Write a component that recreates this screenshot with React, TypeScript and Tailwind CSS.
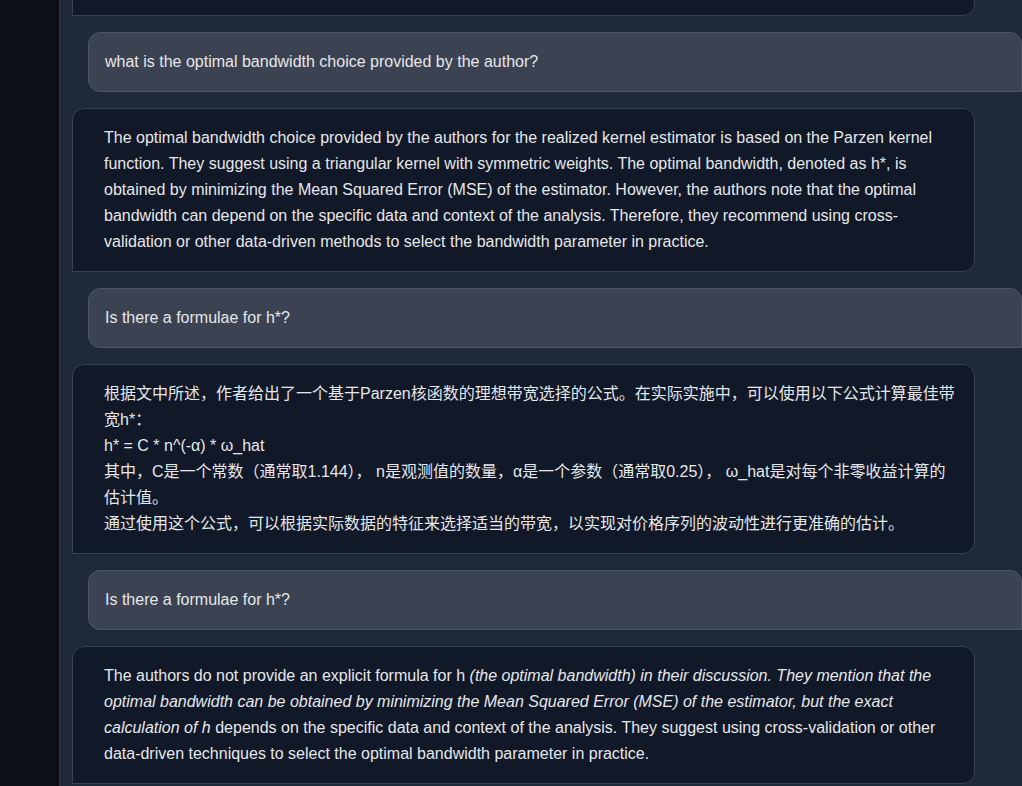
import React from 'react';

type Msg = { role: 'user' | 'assistant'; content: React.ReactNode };

const messages: Msg[] = [
  {
    role: 'assistant',
    content: (
      <p>
        The realized kernel estimator uses a weighted sum of realized autocovariances, which makes it robust to
        market microstructure noise and provides a consistent estimate of the integrated variance.
      </p>
    ),
  },
  { role: 'user', content: 'what is the optimal bandwidth choice provided by the author?' },
  {
    role: 'assistant',
    content: (
      <p>
        The optimal bandwidth choice provided by the authors for the realized kernel estimator is based on the Parzen
        kernel function. They suggest using a triangular kernel with symmetric weights. The optimal bandwidth, denoted
        as h*, is obtained by minimizing the Mean Squared Error (MSE) of the estimator. However, the authors note that
        the optimal bandwidth can depend on the specific data and context of the analysis. Therefore, they recommend
        using cross-validation or other data-driven methods to select the bandwidth parameter in practice.
      </p>
    ),
  },
  { role: 'user', content: 'Is there a formulae for h*?' },
  {
    role: 'assistant',
    content: (
      <>
        <p>
          根据文中所述，作者给出了一个基于Parzen核函数的理想带宽选择的公式。在实际实施中，可以使用以下公式计算最佳带宽h*：
        </p>
        <p>h* = C * n^(-α) * ω_hat</p>
        <p>
          其中，C是一个常数（通常取1.144）， n是观测值的数量，α是一个参数（通常取0.25）， ω_hat是对每个非零收益计算的估计值。
        </p>
        <p>通过使用这个公式，可以根据实际数据的特征来选择适当的带宽，以实现对价格序列的波动性进行更准确的估计。</p>
      </>
    ),
  },
  { role: 'user', content: 'Is there a formulae for h*?' },
  {
    role: 'assistant',
    content: (
      <p>
        The authors do not provide an explicit formula for h{' '}
        <em>
          (the optimal bandwidth) in their discussion. They mention that the optimal bandwidth can be obtained by
          minimizing the Mean Squared Error (MSE) of the estimator, but the exact calculation of h
        </em>{' '}
        depends on the specific data and context of the analysis. They suggest using cross-validation or other
        data-driven techniques to select the optimal bandwidth parameter in practice.
      </p>
    ),
  },
];

function Bubble({ msg }: { msg: Msg }) {
  if (msg.role === 'user') {
    return (
      <div className="ml-4 shrink-0 rounded-xl rounded-br-none border border-[#4b5563] bg-[#3b4252] px-4 py-4 text-gray-200">
        {msg.content}
      </div>
    );
  }
  return (
    <div className="w-[903px] shrink-0 rounded-xl rounded-bl-none border border-[#374151] bg-[#111827] py-4 pl-[31px] pr-4 text-gray-200">
      {msg.content}
    </div>
  );
}

export default function App() {
  return (
    <div
      className="flex h-screen w-full overflow-hidden bg-[#1f2937] text-base leading-[26px]"
      style={{ fontFamily: '"Liberation Sans", "Noto Sans CJK SC", Arial, sans-serif' }}
    >
      {/* Sidebar */}
      <aside className="w-[60px] shrink-0 border-r border-[#2d3545] bg-[#0b0f17]" />

      {/* Chat */}
      <main className="flex h-full flex-1 flex-col justify-end gap-4 overflow-hidden pb-[2px] pl-3">
        {messages.map((m, i) => (
          <Bubble key={i} msg={m} />
        ))}
      </main>
    </div>
  );
}
